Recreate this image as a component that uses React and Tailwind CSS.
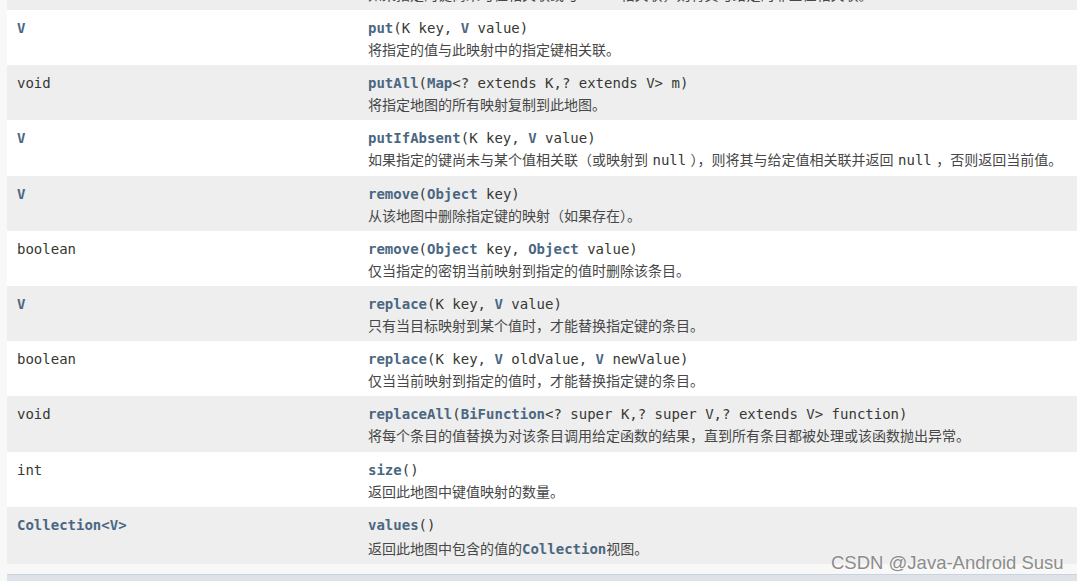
import React from "react";

const B = ({ children }) => (
  <span className="font-bold text-[#4a6782]">{children}</span>
);
const M = ({ children }) => (
  <span className="font-['DejaVu_Sans_Mono',monospace] text-[#353833]">{children}</span>
);

const rows = [
  {
    type: <B>V</B>,
    sig: (
      <>
        <B>put</B>(K key, <B>V</B> value)
      </>
    ),
    desc: "将指定的值与此映射中的指定键相关联。",
  },
  {
    type: "void",
    sig: (
      <>
        <B>putAll</B>(<B>Map</B>&lt;? extends K,? extends V&gt; m)
      </>
    ),
    desc: "将指定地图的所有映射复制到此地图。",
  },
  {
    type: <B>V</B>,
    sig: (
      <>
        <B>putIfAbsent</B>(K key, <B>V</B> value)
      </>
    ),
    desc: (
      <>
        如果指定的键尚未与某个值相关联（或映射到 <M>null</M> ），则将其与给定值相关联并返回 <M>null</M> ，否则返回当前值。
      </>
    ),
  },
  {
    type: <B>V</B>,
    sig: (
      <>
        <B>remove</B>(<B>Object</B> key)
      </>
    ),
    desc: "从该地图中删除指定键的映射（如果存在）。",
  },
  {
    type: "boolean",
    sig: (
      <>
        <B>remove</B>(<B>Object</B> key, <B>Object</B> value)
      </>
    ),
    desc: "仅当指定的密钥当前映射到指定的值时删除该条目。",
  },
  {
    type: <B>V</B>,
    sig: (
      <>
        <B>replace</B>(K key, <B>V</B> value)
      </>
    ),
    desc: "只有当目标映射到某个值时，才能替换指定键的条目。",
  },
  {
    type: "boolean",
    sig: (
      <>
        <B>replace</B>(K key, <B>V</B> oldValue, <B>V</B> newValue)
      </>
    ),
    desc: "仅当当前映射到指定的值时，才能替换指定键的条目。",
  },
  {
    type: "void",
    sig: (
      <>
        <B>replaceAll</B>(<B>BiFunction</B>&lt;? super K,? super V,? extends V&gt; function)
      </>
    ),
    desc: "将每个条目的值替换为对该条目调用给定函数的结果，直到所有条目都被处理或该函数抛出异常。",
  },
  {
    type: "int",
    sig: (
      <>
        <B>size</B>()
      </>
    ),
    desc: "返回此地图中键值映射的数量。",
  },
  {
    type: <B>Collection&lt;V&gt;</B>,
    sig: (
      <>
        <B>values</B>()
      </>
    ),
    desc: (
      <>
        返回此地图中包含的值的<span className="font-['DejaVu_Sans_Mono',monospace] font-bold text-[#4a6782]">Collection</span>视图。
      </>
    ),
    last: true,
  },
];

function Row({ r, gray, first }) {
  return (
    <div
      className={`flex shrink-0 ${r.last ? "h-[57px]" : "h-[55.2px]"} ${gray ? "bg-[#eeeeee]" : "bg-white"} ${first ? "-mt-[45.2px]" : ""}`}
    >
      <div className="w-[351px] shrink-0 pl-[10px] pt-[8px] font-['DejaVu_Sans_Mono',monospace] text-[14px] leading-[20px] text-[#353833] whitespace-nowrap">
        {r.type}
      </div>
      <div className="flex-1 pl-[10px] pt-[8px] whitespace-nowrap">
        <div className="font-['DejaVu_Sans_Mono',monospace] text-[14px] leading-[20px] text-[#353833]">
          {r.sig}
        </div>
        <div
          className={`${r.last ? "mt-[3px]" : "mt-[1px]"} font-['DejaVu_Sans','Noto_Sans_CJK_SC',sans-serif] text-[14px] leading-[22px] text-[#474747]`}
        >
          {r.desc}
        </div>
      </div>
    </div>
  );
}

export default function App() {
  const top = {
    type: <B>V</B>,
    sig: (
      <>
        <B>merge</B>(K key, <B>V</B> value)
      </>
    ),
    desc: (
      <>
        如果指定的键尚未与值相关联或与 <M>null</M> 相关联，则将其与给定的非空值相关联。
      </>
    ),
  };
  return (
    <div className="relative w-[1077px] h-[581px] overflow-hidden bg-[#f8f8f8]">
      <div className="flex flex-col pl-[7px] h-full">
        <div className="flex flex-col bg-white">
          <Row r={top} gray first />
          {rows.map((r, i) => (
            <Row key={i} r={r} gray={i % 2 === 1} />
          ))}
        </div>
        <div className="h-[10px] shrink-0" />
        <div className="flex-1 border-t border-[#c8d3de] bg-[#dee3e9]" />
      </div>
      <div className="absolute left-[831px] top-[551px] font-['Liberation_Sans',Arial,sans-serif] text-[18.5px] leading-[24px] text-[#8c8c8c] whitespace-nowrap [text-shadow:0_0_2px_rgba(255,255,255,0.9)]">
        CSDN @Java-Android Susu
      </div>
    </div>
  );
}
